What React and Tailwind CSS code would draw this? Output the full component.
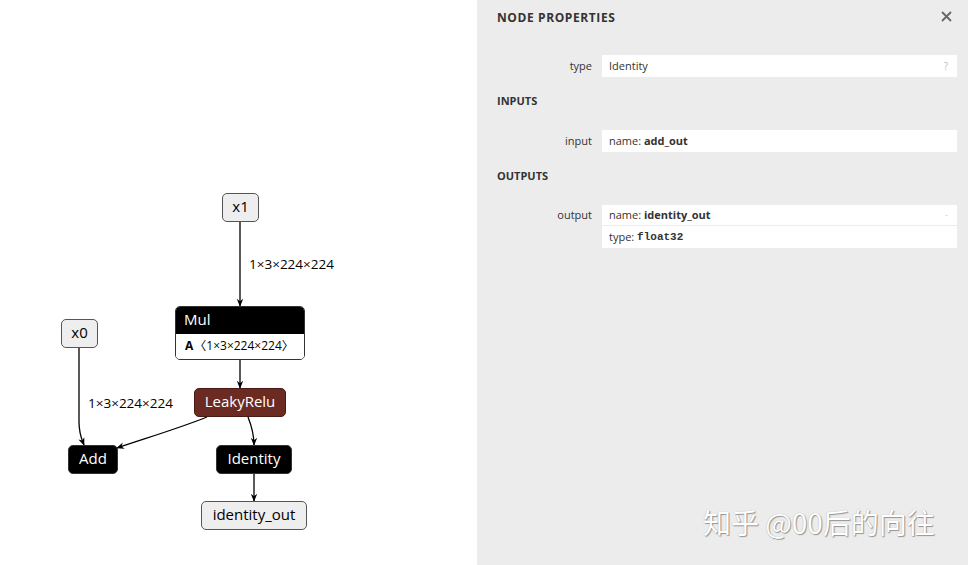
import React from "react";

function Node({ x, y, w, h, label, variant }) {
  const cls =
    variant === "black"
      ? "bg-black text-white border-[#333]"
      : variant === "red"
      ? "bg-[#6b2a22] text-white border-[#4a1a14]"
      : "bg-[#eeeeee] text-black border-[#555]";
  return (
    <div
      className={`absolute flex items-center justify-center rounded-[5px] border text-[15px] leading-none pb-[3px] ${cls}`}
      style={{ left: x, top: y, width: w, height: h }}
    >
      {label}
    </div>
  );
}

export default function App() {
  return (
    <div
      className="flex w-[968px] h-[565px] overflow-hidden"
      style={{ fontFamily: '"Open Sans", "Noto Sans", sans-serif' }}
    >
      {/* Graph canvas */}
      <div className="relative w-[477px] h-full bg-white">
        <svg className="absolute left-0 top-0" width="477" height="565">
          <defs>
            <marker
              id="arr"
              viewBox="0 0 10 10"
              refX="9"
              refY="5"
              markerWidth="8"
              markerHeight="8"
              orient="auto"
              markerUnits="userSpaceOnUse"
            >
              <path d="M0,1 L10,5 L0,9 L3,5 Z" fill="#000" />
            </marker>
          </defs>
          <g stroke="#000" strokeWidth="1.3" fill="none" markerEnd="url(#arr)">
            <path d="M240,221 L240,306" />
            <path d="M240,359 L240,388" />
            <path d="M248,417 C252,427 254,434 254,445" />
            <path d="M254,473 L254,501" />
            <path d="M79,347 L79,422 C79,434 82,440 84,445" />
            <path d="M207,417 C180,428 140,440 117,448" />
          </g>
        </svg>

        <Node x={222} y={193} w={37} h={29} label="x1" />
        <Node x={61} y={319} w={37} h={29} label="x0" />

        <div className="absolute left-[249px] top-[258px] text-[13.5px] leading-none text-black">
          1×3×224×224
        </div>
        <div className="absolute left-[88px] top-[397px] text-[13.5px] leading-none text-black">
          1×3×224×224
        </div>

        {/* Mul */}
        <div className="absolute left-[175px] top-[306px] w-[130px] h-[54px] flex flex-col rounded-[5px] border border-[#333] overflow-hidden">
          <div className="h-[27px] bg-black text-white text-[15px] flex items-center pl-[8px] leading-none pb-[3px]">
            Mul
          </div>
          <div className="flex-1 bg-white flex items-center pl-[9px] text-[12px] leading-none text-black pb-[1px]">
            <span className="font-bold">A</span>
            <span className="ml-[1px] flex items-center">
              <span style={{ fontFamily: '"Noto Sans CJK SC", sans-serif' }} className="text-[12px]">〈</span>
              <span>1×3×224×224</span>
              <span style={{ fontFamily: '"Noto Sans CJK SC", sans-serif' }} className="text-[12px]">〉</span>
            </span>
          </div>
        </div>

        <Node x={194} y={388} w={92} h={29} label="LeakyRelu" variant="red" />
        <Node x={68} y={445} w={50} h={29} label="Add" variant="black" />
        <Node x={216} y={445} w={76} h={29} label="Identity" variant="black" />
        <Node x={201} y={501} w={106} h={29} label="identity_out" />
      </div>

      {/* Properties panel */}
      <div className="relative flex-1 h-full bg-[#ececec] pl-[20px] pr-[11px] pt-[10px] text-[11px] text-[#333]">
        <div className="flex items-center justify-between h-[16px]">
          <div className="font-bold tracking-[0.6px] text-[12px] text-[#333]">NODE PROPERTIES</div>
          <div className="mr-[5px] -mt-[3px]">
            <svg width="11" height="11" viewBox="0 0 11 11">
              <path d="M1,1 L10,10 M10,1 L1,10" stroke="#666" strokeWidth="1.8" />
            </svg>
          </div>
        </div>

        {/* type */}
        <div className="flex mt-[29px]">
          <div className="w-[95px] h-[22px] flex items-center justify-end">type</div>
          <div className="ml-[10px] flex-1 h-[22px] bg-white flex items-center justify-between px-[7px]">
            <span>Identity</span>
            <span className="text-[#bbb] text-[10px] mr-[2px]">?</span>
          </div>
        </div>

        <div className="mt-[16px] h-[16px] flex items-center font-bold">INPUTS</div>

        <div className="flex mt-[21px]">
          <div className="w-[95px] h-[22px] flex items-center justify-end">input</div>
          <div className="ml-[10px] flex-1 h-[22px] bg-white flex items-center px-[7px]">
            <span>name:&nbsp;</span>
            <span className="font-bold">add_out</span>
          </div>
        </div>

        <div className="mt-[16px] h-[16px] flex items-center font-bold">OUTPUTS</div>

        <div className="flex mt-[21px]">
          <div className="w-[95px] h-[21px] flex items-center justify-end">output</div>
          <div className="ml-[10px] flex-1 bg-white flex flex-col">
            <div className="h-[21px] flex items-center justify-between px-[7px] border-b border-[#ececec]">
              <span>
                <span>name:&nbsp;</span>
                <span className="font-bold">identity_out</span>
              </span>
              <span className="text-[#ccc] text-[9px] mr-[2px]">-</span>
            </div>
            <div className="h-[22px] flex items-center px-[7px]">
              <span>type:&nbsp;</span>
              <span
                className="font-bold"
                style={{ fontFamily: '"Liberation Mono", "DejaVu Sans Mono", monospace' }}
              >
                float32
              </span>
            </div>
          </div>
        </div>

        <div
          className="absolute left-[226px] top-[508px] text-[28px] leading-none text-white [text-shadow:1px_1px_1px_rgba(0,0,0,0.35),0_0_1px_rgba(0,0,0,0.3)]"
          style={{ fontFamily: '"Noto Sans CJK SC", "Noto Sans", sans-serif' }}
        >
          知乎 @00后的向往
        </div>
      </div>
    </div>
  );
}
